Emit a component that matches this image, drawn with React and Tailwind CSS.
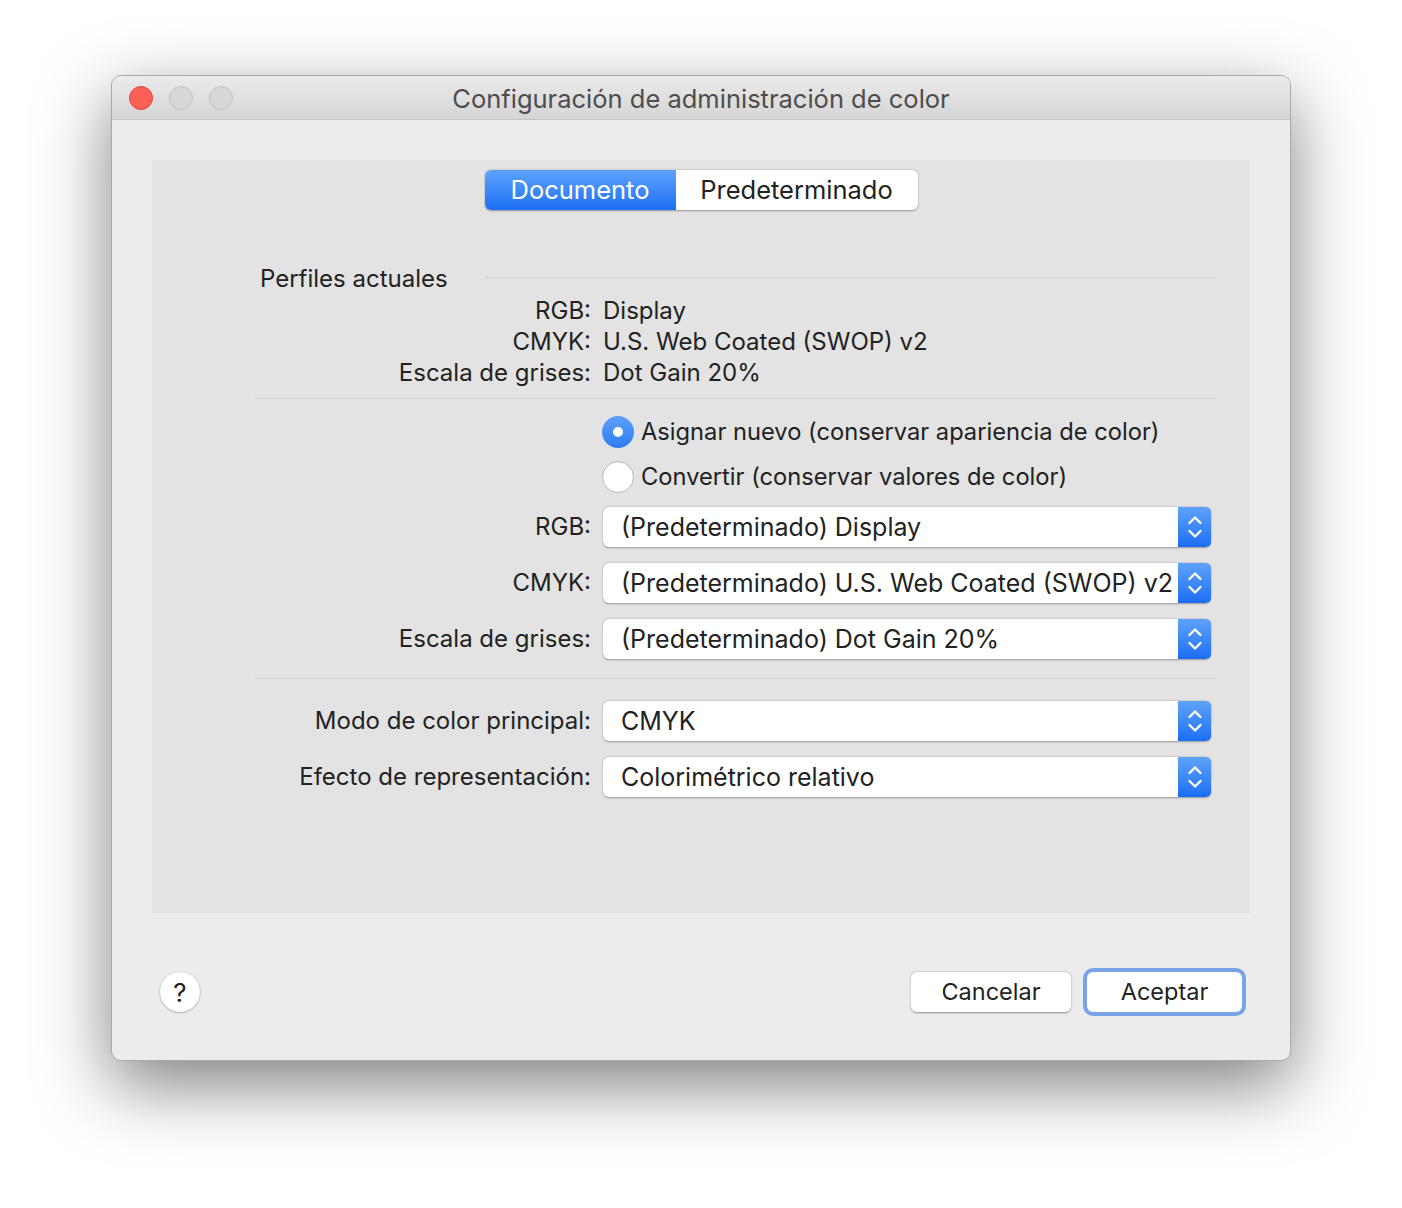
import { useState } from "react";

const font = { fontFamily: "Inter, 'Noto Sans', sans-serif" };

const Stepper = () => (
  <div className="flex h-full w-[33px] items-center justify-center rounded-r-[5px] bg-gradient-to-b from-[#5ea2fa] to-[#1a6ef5]">
    <svg width="16" height="30" viewBox="0 0 16 30" fill="none" stroke="white" strokeWidth="2.4" strokeLinecap="round" strokeLinejoin="round">
      <path d="M2.5 11 L8 5.5 L13.5 11" />
      <path d="M2.5 19 L8 24.5 L13.5 19" />
    </svg>
  </div>
);

const Select = ({ value }) => (
  <div className="flex h-[40px] w-[608px] items-stretch rounded-[6px] bg-white shadow-[0_0.5px_2px_rgba(0,0,0,0.35)]">
    <div className="flex-1 truncate pl-[18px] text-[25px] leading-[40px] text-[#222]">{value}</div>
    <Stepper />
  </div>
);

const SelectRow = ({ label, value }) => (
  <div className="flex items-center">
    <div className="w-[348px] pr-[12px] text-right text-[24px] text-[#222]">{label}</div>
    <Select value={value} />
  </div>
);

const Radio = ({ checked, label, onClick }) => (
  <button onClick={onClick} className="flex h-[32px] items-center gap-[7px] text-[23.7px] text-[#222]">
    {checked ? (
      <span className="flex h-[32px] w-[32px] items-center justify-center rounded-full bg-gradient-to-b from-[#5da1fa] to-[#2c7bf3]">
        <span className="h-[10px] w-[10px] rounded-full bg-white" />
      </span>
    ) : (
      <span className="h-[32px] w-[32px] rounded-full border border-[#b9b9b9] bg-white shadow-[inset_0_1px_1px_rgba(0,0,0,0.05)]" />
    )}
    {label}
  </button>
);

export default function App() {
  const [tab, setTab] = useState("doc");
  const [mode, setMode] = useState("assign");

  return (
    <div className="min-h-[1208px] w-[1402px] bg-white pt-[75px] pl-[111px]" style={font}>
      <div className="w-[1180px] overflow-hidden rounded-[10px] border border-[#a9a9a9] bg-[#ececec] shadow-[0_24px_70px_rgba(0,0,0,0.5)]">
        {/* title bar */}
        <div className="relative flex h-[44px] items-center border-b border-[#c4c4c4] bg-gradient-to-b from-[#ebebeb] to-[#d5d5d5]">
          <div className="absolute left-[17px] flex gap-[16px]">
            <span className="h-[24px] w-[24px] rounded-full border border-[#e0443e] bg-[#fe5f57]" />
            <span className="h-[24px] w-[24px] rounded-full border border-[#c2c2c2] bg-[#d8d8d8]" />
            <span className="h-[24px] w-[24px] rounded-full border border-[#c2c2c2] bg-[#d8d8d8]" />
          </div>
          <div className="w-full pt-[3px] text-center text-[25.5px] text-[#4d4d4d]">Configuración de administración de color</div>
        </div>

        {/* body */}
        <div className="px-[40px] pt-[40px] pb-[48px]">
          <div className="h-[753px] bg-[#e3e3e3] pt-[10px]">
            <div className="flex justify-center">
              <div className="flex h-[40px] rounded-[6px] bg-white shadow-[0_0.5px_2px_rgba(0,0,0,0.35)]">
                <button
                  onClick={() => setTab("doc")}
                  className={`w-[191px] rounded-l-[6px] text-[25.5px] ${tab === "doc" ? "bg-gradient-to-b from-[#5ea2fa] to-[#1b6ff5] text-white" : "text-[#222]"}`}
                >
                  Documento
                </button>
                <button
                  onClick={() => setTab("def")}
                  className={`w-[242px] rounded-r-[6px] text-[25.5px] ${tab === "def" ? "bg-gradient-to-b from-[#5ea2fa] to-[#1b6ff5] text-white" : "text-[#222]"}`}
                >
                  Predeterminado
                </button>
              </div>
            </div>

            <div className="pl-[103px] pr-[34px] pt-[54px]">
              <div className="flex h-[30px] items-center">
                <div className="pl-[5px] text-[24px] text-[#222]">Perfiles actuales</div>
                <div className="mb-[4px] ml-[37px] h-px flex-1 bg-[#d3d3d3]" />
              </div>
              <div className="mt-[1px] text-[24px] leading-[31px] text-[#222]">
                {[
                  ["RGB:", "Display"],
                  ["CMYK:", "U.S. Web Coated (SWOP) v2"],
                  ["Escala de grises:", "Dot Gain 20%"],
                ].map(([k, v]) => (
                  <div key={k} className="flex">
                    <div className="w-[348px] pr-[12px] text-right">{k}</div>
                    <div>{v}</div>
                  </div>
                ))}
              </div>
              <div className="mt-[10px] h-px bg-[#d3d3d3]" />

              <div className="mt-[17px] flex flex-col gap-[13px] pl-[347px]">
                <Radio checked={mode === "assign"} onClick={() => setMode("assign")} label="Asignar nuevo (conservar apariencia de color)" />
                <Radio checked={mode === "convert"} onClick={() => setMode("convert")} label="Convertir (conservar valores de color)" />
              </div>

              <div className="mt-[14px] flex flex-col gap-[16px]">
                <SelectRow label="RGB:" value="(Predeterminado) Display" />
                <SelectRow label="CMYK:" value="(Predeterminado) U.S. Web Coated (SWOP) v2" />
                <SelectRow label="Escala de grises:" value="(Predeterminado) Dot Gain 20%" />
              </div>

              <div className="mt-[19px] h-px bg-[#d3d3d3]" />

              <div className="mt-[22px] flex flex-col gap-[16px]">
                <SelectRow label="Modo de color principal:" value="CMYK" />
                <SelectRow label="Efecto de representación:" value="Colorimétrico relativo" />
              </div>
            </div>
          </div>

          {/* footer */}
          <div className="mt-[59px] flex items-center">
            <button className="ml-[8px] flex h-[40px] w-[40px] items-center justify-center rounded-full bg-white text-[26px] text-[#222] shadow-[0_0.5px_2px_rgba(0,0,0,0.4)]">
              ?
            </button>
            <div className="ml-auto flex items-center gap-[16px] pr-[8px]">
              <button className="h-[40px] w-[160px] rounded-[6px] bg-white text-[23.5px] text-[#222] shadow-[0_0.5px_2px_rgba(0,0,0,0.4)]">
                Cancelar
              </button>
              <button className="h-[40px] w-[155px] rounded-[6px] bg-white text-[23.5px] text-[#222] shadow-[0_0_0_4px_rgba(100,150,230,0.85)]">
                Aceptar
              </button>
            </div>
          </div>
        </div>
      </div>
    </div>
  );
}
